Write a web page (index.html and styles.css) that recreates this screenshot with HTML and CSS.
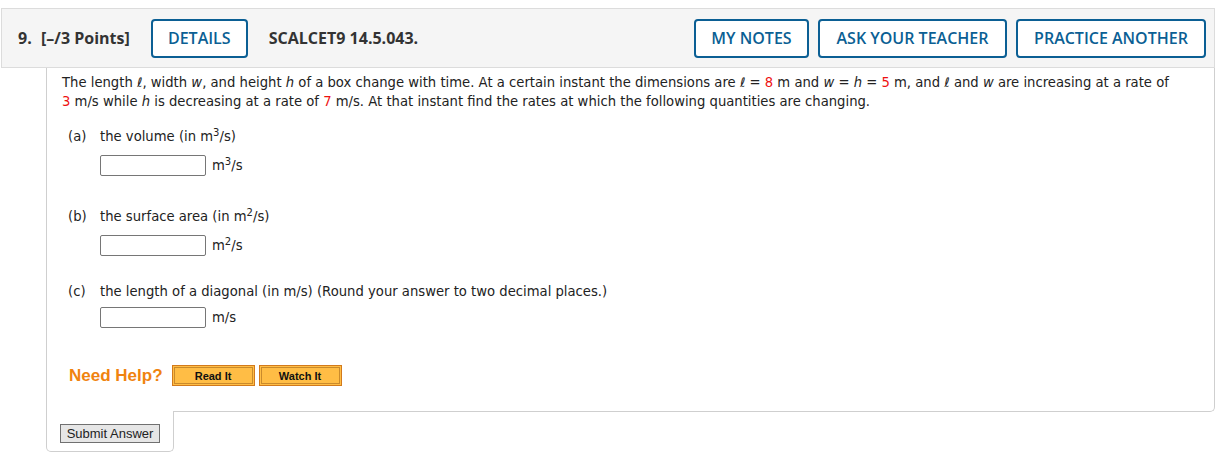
FILE: index.html
```html
<!DOCTYPE html>
<html>
<head>
<meta charset="utf-8">
<link rel="stylesheet" href="styles.css">
</head>
<body>
<div class="question">
  <div class="qheader">
    <span class="qnum">9.</span>
    <span class="qpoints">[&ndash;/3 Points]</span>
    <span class="btn details">DETAILS</span>
    <span class="qcode">SCALCET9 14.5.043.</span>
    <span class="spacer"></span>
    <span class="btn notes">MY NOTES</span>
    <span class="btn ask">ASK YOUR TEACHER</span>
    <span class="btn practice">PRACTICE ANOTHER</span>
  </div>
  <div class="qbody">
    <p class="stem">The length <i>&#8467;</i>, width <i>w</i>, and height <i>h</i> of a box change with time. At a certain instant the dimensions are <i>&#8467;</i> = <span class="red">8</span> m and <i>w</i> = <i>h</i> = <span class="red">5</span> m, and <i>&#8467;</i> and <i>w</i> are increasing at a rate of<br><span class="red">3</span> m/s while <i>h</i> is decreasing at a rate of <span class="red">7</span> m/s. At that instant find the rates at which the following quantities are changing.</p>
    <div class="part part-a">
      <div class="plabel"><span class="pl">(a)</span>the volume (in m<sup>3</sup>/s)</div>
      <div class="answer"><span class="inbox"></span><span class="unit">m<sup>3</sup>/s</span></div>
    </div>
    <div class="part part-b">
      <div class="plabel"><span class="pl">(b)</span>the surface area (in m<sup>2</sup>/s)</div>
      <div class="answer"><span class="inbox"></span><span class="unit">m<sup>2</sup>/s</span></div>
    </div>
    <div class="part part-c">
      <div class="plabel"><span class="pl">(c)</span>the length of a diagonal (in m/s) (Round your answer to two decimal places.)</div>
      <div class="answer"><span class="inbox"></span><span class="unit">m/s</span></div>
    </div>
    <div class="help">
      <span class="needhelp">Need Help?</span>
      <span class="hbtn"><span class="hin">Read It</span></span>
      <span class="hbtn"><span class="hin">Watch It</span></span>
    </div>
  </div>
  <div class="submittab">
    <span class="submit">Submit Answer</span>
  </div>
</div>
</body>
</html>
```

FILE: styles.css
```css
html, body {
  margin: 0;
  padding: 0;
  background: #fff;
}
.question {
  margin: 8px 2px 0 1px;
}
.qheader {
  display: flex;
  align-items: center;
  height: 58px;
  border: 1px solid #dcdcdc;
  background: #f5f5f5;
  font-family: "Open Sans", sans-serif;
  font-size: 16px;
  color: #333;
  padding: 0 8px 0 16px;
}
.qnum {
  font-weight: 700;
  width: 23px;
}
.qpoints {
  font-weight: 700;
  margin-right: 21px;
}
.qcode {
  font-weight: 700;
  margin-left: 21px;
}
.spacer {
  flex: 1;
}
.btn {
  display: flex;
  align-items: center;
  justify-content: center;
  box-sizing: border-box;
  height: 39px;
  border: 2px solid #0b5f94;
  border-radius: 4px;
  color: #0b5f94;
  font-weight: 600;
  margin-left: 9px;
  background: #fff;
}
.btn.details {
  margin-left: 0;
  width: 97px;
}
.btn.notes { width: 115px; }
.btn.ask { width: 189px; }
.btn.practice { width: 190px; }
.qbody {
  margin-left: 45px;
  border: 1px solid #cfcfcf;
  border-top: none;
  border-radius: 0 0 5px 0;
  padding: 5px 15px 0 15px;
  height: 338px;
  font-family: "DejaVu Sans", Verdana, sans-serif;
  font-size: 13.2px;
  color: #222;
}
.stem {
  margin: 0;
  line-height: 19px;
}
.red {
  color: #e11;
}
sup {
  font-size: 10px;
  line-height: 0;
  vertical-align: 5px;
}
.part {
  margin-left: 6px;
}
.plabel {
  line-height: 19px;
}
.pl {
  display: inline-block;
  width: 32px;
}
.part-a { margin-top: 16px; }
.part-b { margin-top: 31px; }
.part-c { margin-top: 26px; }
.answer {
  display: flex;
  align-items: center;
  margin-left: 32px;
  margin-top: 9px;
  height: 21px;
}
.part-c .answer { margin-top: 6px; }
.inbox {
  box-sizing: border-box;
  width: 106px;
  height: 21px;
  border: 1px solid #767676;
  border-radius: 2px;
  background: #fff;
}
.unit {
  margin-left: 6px;
}
.help {
  display: flex;
  align-items: center;
  margin-top: 37px;
  margin-left: 7px;
}
.needhelp {
  font-family: "Liberation Sans", Arial, sans-serif;
  font-weight: 700;
  font-size: 17px;
  color: #f0830f;
  margin-right: 9px;
}
.hbtn {
  box-sizing: border-box;
  height: 21px;
  width: 83px;
  border: 1px solid #d27a1c;
  background: #ffbd45;
  padding: 1px;
  margin-right: 4px;
  display: flex;
}
.hin {
  flex: 1;
  border: 1px solid #c98a2c;
  display: flex;
  align-items: center;
  justify-content: center;
  font-family: "Liberation Sans", Arial, sans-serif;
  font-weight: 700;
  font-size: 11px;
  color: #111;
}
.submittab {
  margin-top: -1px;
  margin-left: 45px;
  width: 128px;
  height: 41px;
  box-sizing: border-box;
  border: 1px solid #cfcfcf;
  border-top: none;
  border-radius: 0 0 5px 5px;
  background: #fff;
  padding-top: 13px;
  padding-left: 13px;
}
.submit {
  display: inline-block;
  box-sizing: border-box;
  width: 100px;
  height: 19px;
  border: 1px solid #707070;
  background: #e6e6e6;
  font-family: "Liberation Sans", Arial, sans-serif;
  font-size: 13px;
  line-height: 17px;
  text-align: center;
  color: #222;
}
```
